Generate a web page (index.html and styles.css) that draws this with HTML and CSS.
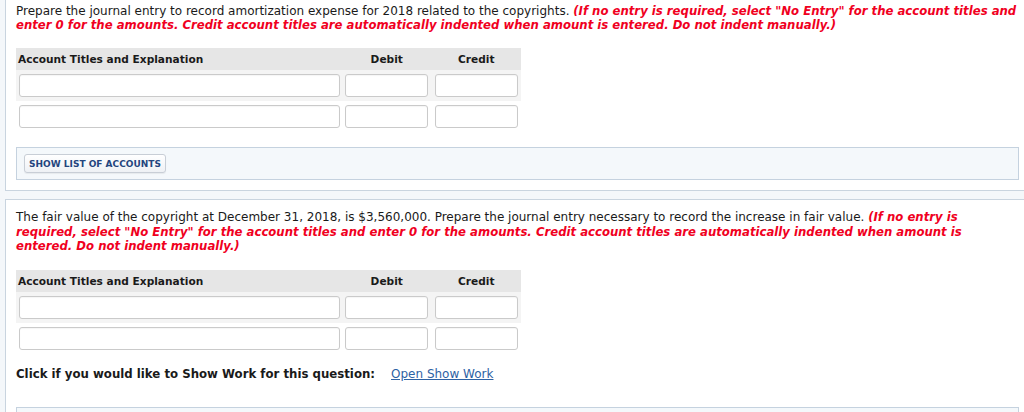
FILE: index.html
```html
<!DOCTYPE html>
<html>
<head>
<meta charset="utf-8">
<link rel="stylesheet" href="styles.css">
</head>
<body>
<div class="panel panel-first">
  <p class="question">Prepare the journal entry to record amortization expense for 2018 related to the copyrights. <em class="note">(If no entry is required, select "No Entry" for the account titles and enter 0 for the amounts. Credit account titles are automatically indented when amount is entered. Do not indent manually.)</em></p>
  <table class="journal">
    <thead>
      <tr><th class="c-acct">Account Titles and Explanation</th><th class="c-amt">Debit</th><th class="c-amt">Credit</th></tr>
    </thead>
    <tbody>
      <tr class="alt"><td><input class="in in-acct" type="text"></td><td><input class="in" type="text"></td><td><input class="in" type="text"></td></tr>
      <tr><td><input class="in in-acct" type="text"></td><td><input class="in" type="text"></td><td><input class="in" type="text"></td></tr>
    </tbody>
  </table>
  <div class="accounts-box">
    <button class="btn" type="button">SHOW LIST OF ACCOUNTS</button>
  </div>
</div>
<div class="panel panel-second">
  <p class="question">The fair value of the copyright at December 31, 2018, is $3,560,000. Prepare the journal entry necessary to record the increase in fair value. <em class="note">(If no entry is required, select "No Entry" for the account titles and enter 0 for the amounts. Credit account titles are automatically indented when amount is entered. Do not indent manually.)</em></p>
  <table class="journal">
    <thead>
      <tr><th class="c-acct">Account Titles and Explanation</th><th class="c-amt">Debit</th><th class="c-amt">Credit</th></tr>
    </thead>
    <tbody>
      <tr class="alt"><td><input class="in in-acct" type="text"></td><td><input class="in" type="text"></td><td><input class="in" type="text"></td></tr>
      <tr><td><input class="in in-acct" type="text"></td><td><input class="in" type="text"></td><td><input class="in" type="text"></td></tr>
    </tbody>
  </table>
  <p class="showwork"><strong class="sw-label">Click if you would like to Show Work for this question:</strong><a class="link" href="#">Open Show Work</a></p>
  <div class="accounts-box box-bottom"></div>
</div>
</body>
</html>
```
FILE: styles.css
```css
html, body {
  margin: 0;
  padding: 0;
  background: #f4f7fa;
  font-family: "DejaVu Sans", Verdana, sans-serif;
  font-size: 12px;
  color: #1a1a1a;
  overflow: hidden;
}

.panel {
  box-sizing: border-box;
  width: 1030px;
  margin-left: 5px;
  background: #fff;
  border: 1px solid #c9d4df;
  padding: 0 10px;
}

.panel-first {
  margin-top: -1px;
  padding-top: 4px;
  padding-bottom: 10px;
}

.panel-second {
  margin-top: 8px;
  padding-top: 10px;
  height: 240px;
}

.question {
  margin: 0;
  width: 1003px;
  line-height: 14px;
}

.panel-second .question {
  width: 960px;
  line-height: 14.5px;
}

.note {
  color: #f0001e;
  font-weight: bold;
  font-style: italic;
  font-size: 11.7px;
}

.journal {
  border-collapse: collapse;
  width: 505px;
  margin-top: 16px;
}

.panel-second .journal {
  margin-top: 16px;
}

.journal th {
  background: #e6e6e6;
  height: 22px;
  padding: 0;
  font-weight: bold;
  font-size: 10.6px;
  text-align: center;
}

.journal th.c-acct {
  text-align: left;
  padding-left: 2px;
  width: 324px;
}

.journal td {
  padding: 0;
  height: 31px;
  text-align: center;
}

.journal tr.alt td {
  background: #f4f4f4;
}

.in {
  box-sizing: border-box;
  display: block;
  margin: 0 auto;
  width: 83px;
  height: 23px;
  border: 1px solid #cacaca;
  border-radius: 3px;
  background: #fff;
  box-shadow: inset 0 1px 1px rgba(0, 0, 0, 0.04);
  font-family: inherit;
}

.in-acct {
  width: 321px;
  margin-left: 3px;
}

.accounts-box {
  box-sizing: border-box;
  width: 1003px;
  height: 33px;
  margin-top: 15px;
  background: #f4f8fb;
  border: 1px solid #c5d2df;
  padding: 6px 0 0 7px;
}

.btn {
  box-sizing: border-box;
  height: 19px;
  width: 142px;
  padding: 0;
  font-family: "DejaVu Sans", Verdana, sans-serif;
  font-size: 9px;
  font-weight: bold;
  color: #24457e;
  background: linear-gradient(#ffffff, #eef1f5);
  border: 1px solid #c8ced6;
  border-radius: 3px;
  box-shadow: 0 1px 1px rgba(0, 0, 0, 0.06);
}

.showwork {
  margin: 13px 0 0 0;
  line-height: 14px;
}

.sw-label {
  font-size: 11.75px;
}

.link {
  margin-left: 16px;
  color: #2e62a4;
  text-decoration: underline;
}

.box-bottom {
  margin-top: 26px;
}
```
